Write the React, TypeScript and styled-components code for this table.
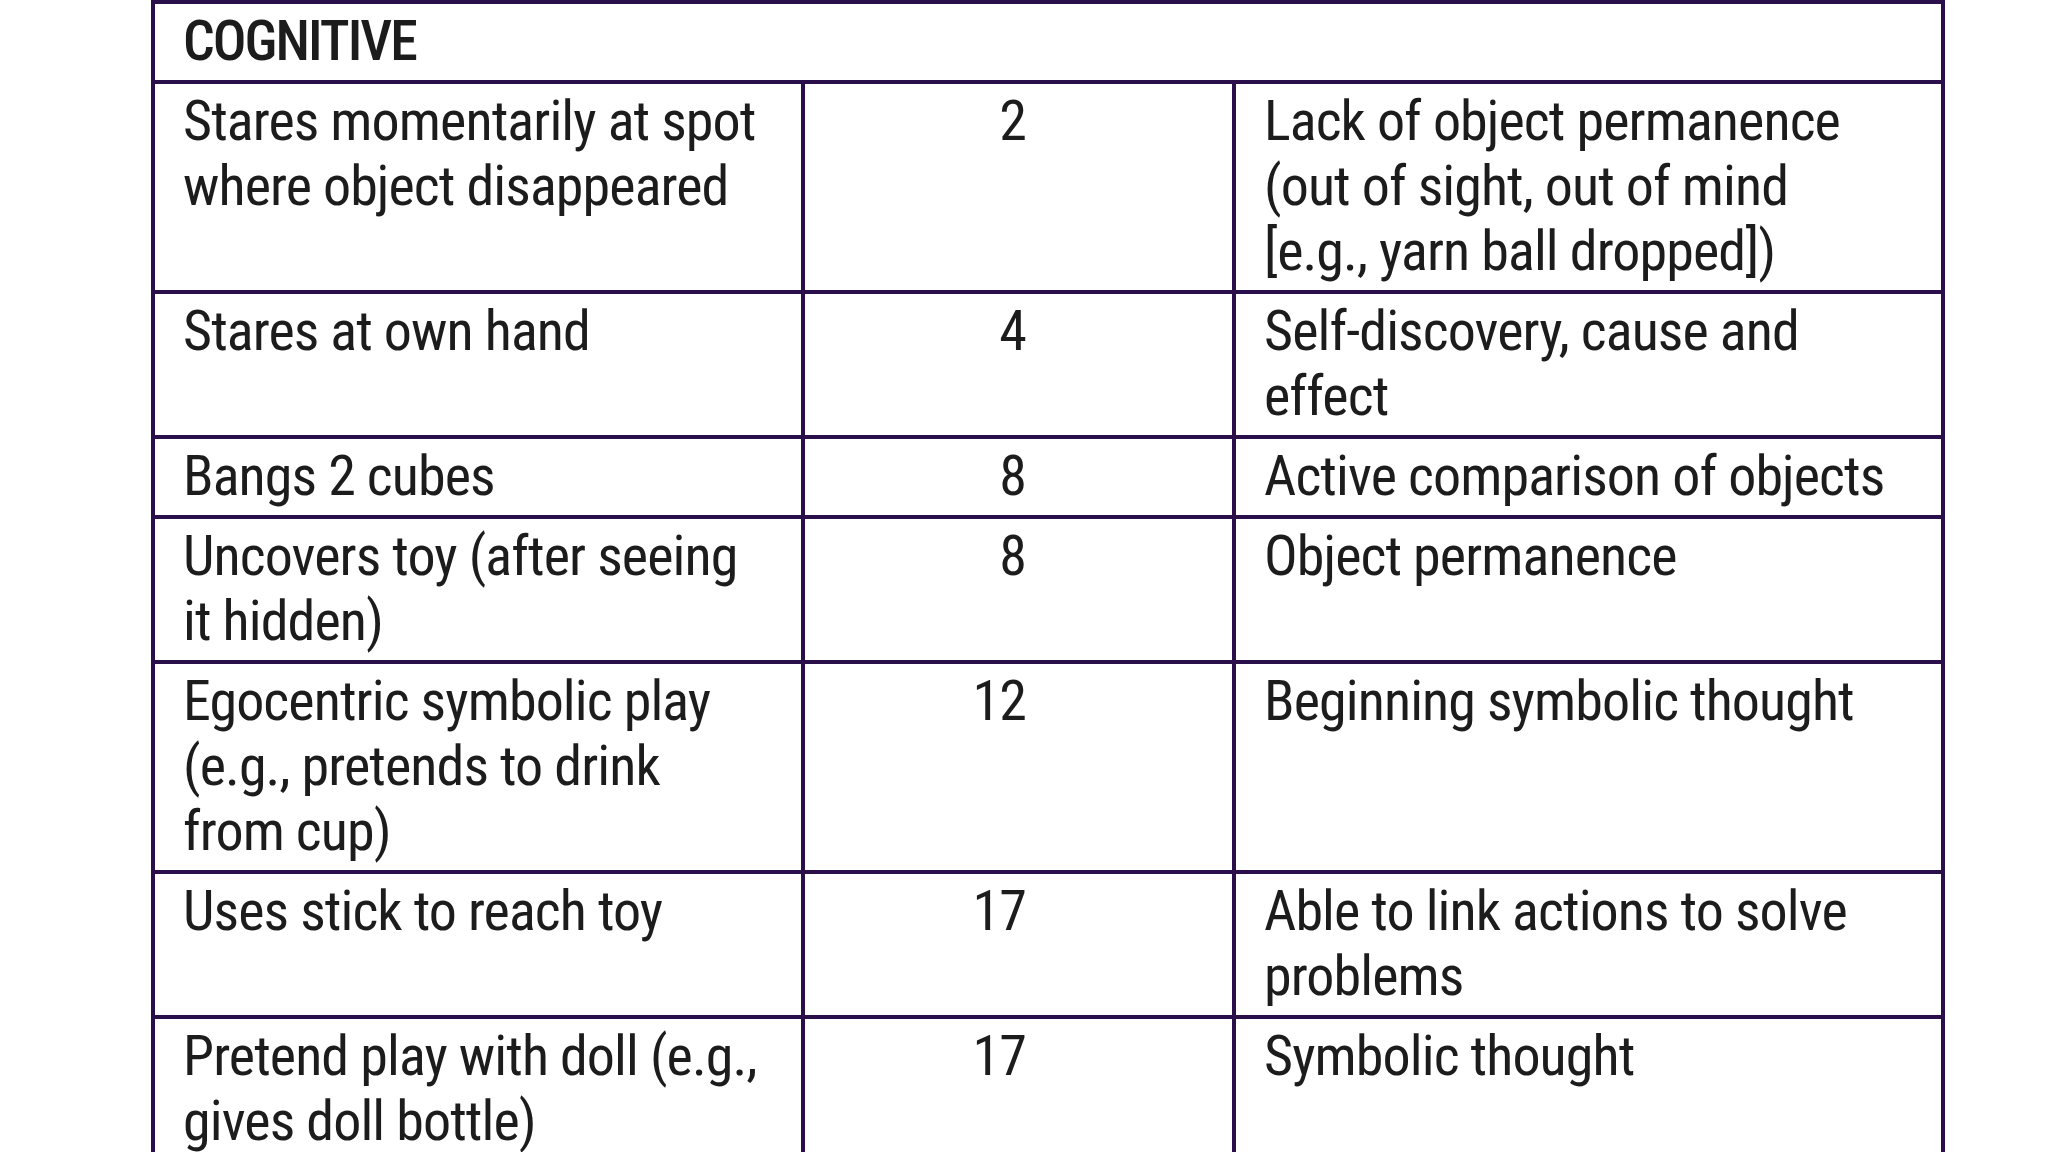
import React from "react";
import styled, { createGlobalStyle } from "styled-components";

const GlobalStyle = createGlobalStyle`
  html, body {
    margin: 0;
    padding: 0;
    background: #ffffff;
  }
  body {
    font-family: "Roboto Condensed", "Liberation Sans Narrow", "DejaVu Sans Condensed", sans-serif;
    color: #1c1c1c;
  }
`;

const Page = styled.div`
  width: 2048px;
  height: 1152px;
  overflow: hidden;
  padding-left: 151px;
  box-sizing: border-box;
`;

const Table = styled.table`
  width: 1790px;
  table-layout: fixed;
  border-collapse: collapse;
  border-top: 4px solid #2a0f4a;
`;

const Row = styled.tr``;

const Cell = styled.td<{ $align?: "left" | "right" }>`
  border: 4px solid #2a0f4a;
  padding: 5px ${(p) => (p.$align === "right" ? "206px" : "16px")} 6px 28px;
  text-align: ${(p) => p.$align ?? "left"};
  vertical-align: top;
  font-size: 56px;
  line-height: 65px;
  letter-spacing: -0.9px;
  white-space: nowrap;
`;

const HeadCell = styled(Cell)`
  font-weight: 500;
  letter-spacing: -2px;
  padding-top: 5px;
  padding-bottom: 6px;
`;

const Line = styled.span`
  display: block;
`;

type Item = { skill: string[]; age: string; meaning: string[] };

const items: Item[] = [
  {
    skill: ["Stares momentarily at spot", "where object disappeared"],
    age: "2",
    meaning: ["Lack of object permanence", "(out of sight, out of mind", "[e.g., yarn ball dropped])"],
  },
  { skill: ["Stares at own hand"], age: "4", meaning: ["Self-discovery, cause and", "effect"] },
  { skill: ["Bangs 2 cubes"], age: "8", meaning: ["Active comparison of objects"] },
  { skill: ["Uncovers toy (after seeing", "it hidden)"], age: "8", meaning: ["Object permanence"] },
  {
    skill: ["Egocentric symbolic play", "(e.g., pretends to drink", "from cup)"],
    age: "12",
    meaning: ["Beginning symbolic thought"],
  },
  { skill: ["Uses stick to reach toy"], age: "17", meaning: ["Able to link actions to solve", "problems"] },
  {
    skill: ["Pretend play with doll (e.g.,", "gives doll bottle)"],
    age: "17",
    meaning: ["Symbolic thought"],
  },
];

const Lines: React.FC<{ lines: string[] }> = ({ lines }) => (
  <>
    {lines.map((l, i) => (
      <Line key={i}>{l}</Line>
    ))}
  </>
);

export default function App() {
  return (
    <>
      <GlobalStyle />
      <Page>
        <Table>
          <colgroup>
            <col style={{ width: 650 }} />
            <col style={{ width: 431 }} />
            <col style={{ width: 709 }} />
          </colgroup>
          <tbody>
            <Row>
              <HeadCell colSpan={3}>COGNITIVE</HeadCell>
            </Row>
            {items.map((it, i) => (
              <Row key={i}>
                <Cell>
                  <Lines lines={it.skill} />
                </Cell>
                <Cell $align="right">{it.age}</Cell>
                <Cell>
                  <Lines lines={it.meaning} />
                </Cell>
              </Row>
            ))}
          </tbody>
        </Table>
      </Page>
    </>
  );
}
